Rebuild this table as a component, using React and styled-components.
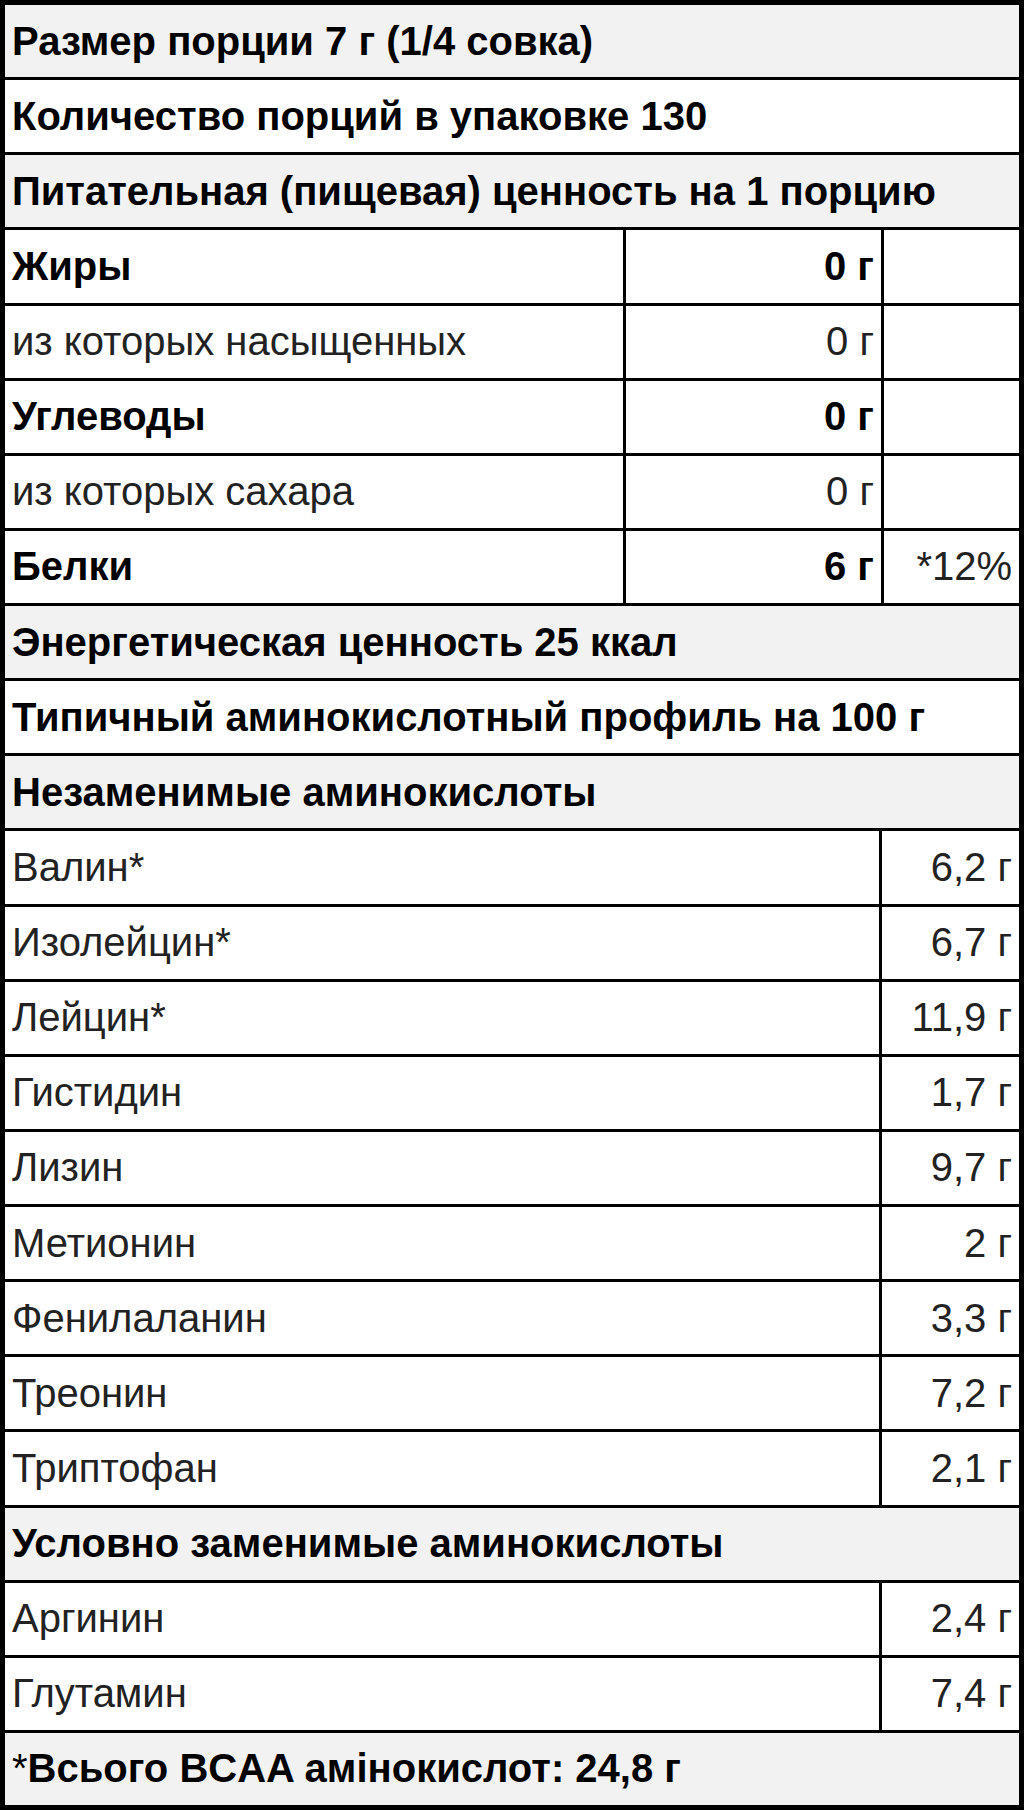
import styled, { createGlobalStyle } from "styled-components";

const GlobalStyle = createGlobalStyle`
    html, body {
        margin: 0;
        padding: 0;
        background: #fff;
    }
    body {
        font-family: "Liberation Sans", Arial, sans-serif;
    }
`

const nutrition = [
    { name: 'Жиры', value: '0 г', bold: true },
    { name: 'из которых насыщенных', value: '0 г' },
    { name: 'Углеводы', value: '0 г', bold: true },
    { name: 'из которых сахара', value: '0 г' },
    { name: 'Белки', value: '6 г', extra: '*12%', bold: true },
]

const essential = [
    ['Валин*', '6,2 г'],
    ['Изолейцин*', '6,7 г'],
    ['Лейцин*', '11,9 г'],
    ['Гистидин', '1,7 г'],
    ['Лизин', '9,7 г'],
    ['Метионин', '2 г'],
    ['Фенилаланин', '3,3 г'],
    ['Треонин', '7,2 г'],
    ['Триптофан', '2,1 г'],
]

const conditional = [
    ['Аргинин', '2,4 г'],
    ['Глутамин', '7,4 г'],
]

export default function App(){
    return(
        <>
        <GlobalStyle />
        <Table>
            <Row><Cell $shade $bold>Размер порции 7 г (1/4 совка)</Cell></Row>
            <Row><Cell $bold>Количество порций в упаковке 130</Cell></Row>
            <Row><Cell $shade $bold>Питательная (пищевая) ценность на 1 порцию</Cell></Row>
            {nutrition.map(item => (
                <Row key={item.name} $cols="618px 255px 1fr">
                    <Cell $bold={item.bold}>{item.name}</Cell>
                    <Cell $bold={item.bold} $right>{item.value}</Cell>
                    <Cell $right>{item.extra}</Cell>
                </Row>
            ))}
            <Row><Cell $shade $bold>Энергетическая ценность 25 ккал</Cell></Row>
            <Row><Cell $bold>Типичный аминокислотный профиль на 100 г</Cell></Row>
            <Row><Cell $shade $bold>Незаменимые аминокислоты</Cell></Row>
            {essential.map(([name, value]) => (
                <Row key={name} $cols="1fr 137px">
                    <Cell>{name}</Cell>
                    <Cell $right>{value}</Cell>
                </Row>
            ))}
            <Row><Cell $shade $bold>Условно заменимые аминокислоты</Cell></Row>
            {conditional.map(([name, value]) => (
                <Row key={name} $cols="1fr 137px">
                    <Cell>{name}</Cell>
                    <Cell $right>{value}</Cell>
                </Row>
            ))}
            <Row><Cell $shade $bold><Star>*</Star>Всього BCAA амінокислот: 24,8 г</Cell></Row>
        </Table>
        </>
    )
}

const Table = styled.div`
    display: flex;
    flex-direction: column;
    gap: 3px;
    width: 1024px;
    height: 1810px;
    box-sizing: border-box;
    border: 5px solid #000;
    background: #000;
`

const Row = styled.div`
    flex: 1;
    display: grid;
    grid-template-columns: ${p => p.$cols || '1fr'};
    gap: 3px;
`

const Cell = styled.div`
    display: flex;
    align-items: center;
    justify-content: ${p => p.$right ? 'flex-end' : 'flex-start'};
    padding: 0 7px;
    background: ${p => p.$shade ? '#f2f2f2' : '#fff'};
    color: ${p => p.$bold ? '#000' : '#222'};
    font-size: 40px;
    font-weight: ${p => p.$bold ? 700 : 400};
    white-space: nowrap;
`

const Star = styled.span`
    font-weight: 400;
`
